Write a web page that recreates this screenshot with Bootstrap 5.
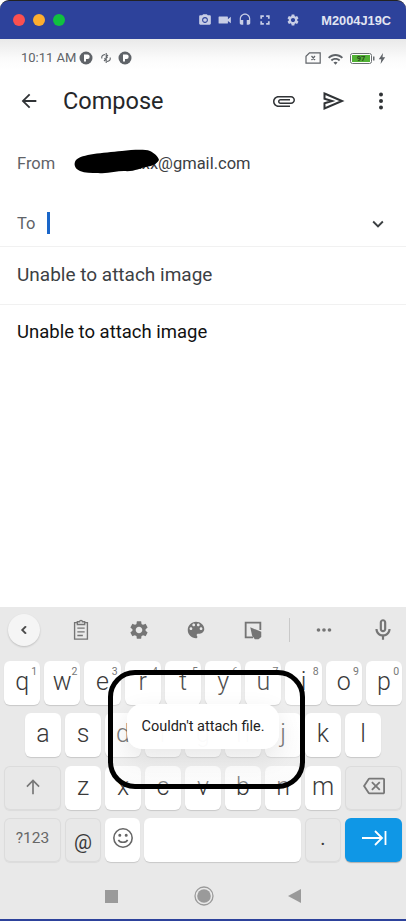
<!DOCTYPE html>
<html lang="en">
<head>
<meta charset="utf-8">
<title>Compose</title>
<link href="https://cdn.jsdelivr.net/npm/bootstrap@5.3.0/dist/css/bootstrap.min.css" rel="stylesheet">
<style>
html,body{margin:0;background:#fff}
body{font-family:Roboto,"Liberation Sans",sans-serif;color:#202124}
.phone{width:406px;height:921px;overflow:hidden;position:relative;background:#fff}
.winbar{height:39px;background:#2d429b;border-radius:9px 9px 0 0;border-top:1px solid #222;padding:0 13px;color:#d5daec}
.dot{width:12px;height:12px;border-radius:50%;margin-right:8px}
.winname{font:700 12.8px "Liberation Sans",sans-serif;color:#e2e5f2;margin-left:21px;margin-right:2px}
.winicons svg{width:14px;height:14px;fill:#c8cee6;margin-left:6px}
.winicons svg.gear{margin-left:14px}
.statusbar{height:36px;padding:2px 20px 0 21px;font-size:13px;color:#5f6368;background:linear-gradient(#e9e9e9 0,#fbfbfb 55%,#fff 85%)}
.statusbar svg{fill:#5f6368}
.appbar{height:52px;padding:0 21px 0 18px}
.apptitle{font-size:23.500px;font-weight:400;margin-left:23px;color:#25272a;padding-top:1px}
.ficon{fill:#303336}
.fieldrow{padding:0 16px;font-size:16.500px}
.fromrow{height:75px}
.torow{height:45px}
.lbl{color:#5f6368;margin-left:1px}
.addr{color:#3c4043;margin-left:21px;position:relative;white-space:nowrap}
.caret-bar{width:2.500px;height:22px;background:#1a66c9;margin-left:12px;margin-top:-3px}
.hair{border-bottom:1px solid #f1f1f1}
.subj{height:58px;font-size:19px;color:#3c4043;padding:0 17px}
.bodytxt{font-size:18.500px;color:#111;padding:15px 17px 0;line-height:24px}
.kb{position:absolute;left:0;right:0;top:607px;height:312px;background:#e9e9e9}
.tools{height:54px}
.backbtn{position:absolute;left:8px;top:7px;width:32px;height:32px;border-radius:50%;background:#f5f5f5;box-shadow:0 1px 2px rgba(0,0,0,.18)}
.tico{position:absolute;top:12px;width:22px;height:22px;fill:#757575}
.tsep{position:absolute;left:289px;top:11px;width:1px;height:24px;background:#c9c9c9}
.keys{padding:0 4px;gap:8.300px}
.krow{display:flex;gap:4px;height:44px}
.krow.mid{padding:0 21px}
.ky{flex:1 1 0;background:#fff;border-radius:6px;box-shadow:0 1px 1px rgba(0,0,0,.14);position:relative;display:flex;align-items:center;justify-content:center;font-size:25px;font-weight:300;color:#3a3a3a;line-height:1;padding-bottom:3px}
.ky sup{position:absolute;top:6px;right:3px;font-size:10.500px;font-weight:400;color:#777;line-height:1}
.alt{background:#e8e8e8;box-shadow:0 0 0 1px #dcdcdc inset,0 1px 1px rgba(0,0,0,.06)}
.wide{flex:0 0 57px}
.ky.num{font-size:15.500px;font-weight:400;color:#666}
.ky.at{flex:0 0 36px;font-size:20px;font-weight:400;padding:4px 0 0}
.ky.emo{flex:0 0 35px}
.ky.space{flex:1 1 0}
.ky.per{flex:0 0 36px;font-size:20px;font-weight:400}
.ky.go{flex:0 0 57px;background:#0f97e6;box-shadow:0 1px 1px rgba(0,0,0,.25)}
.navr{position:absolute;left:0;right:0;top:270px;height:42px}
.ann{position:absolute;left:108px;top:670px;width:197px;height:119px;border:5.500px solid #000;border-radius:27px;background:linear-gradient(rgba(255,255,255,.05) 0,rgba(255,255,255,.3) 40%,rgba(245,245,245,.4) 100%)}
.toastbox{position:absolute;left:127px;top:704px;width:152px;height:45px;background:rgba(255,255,255,.97);border-radius:15px;font-size:14.500px;color:#222;box-shadow:0 8px 24px rgba(0,0,0,.09)}
.strip{position:absolute;left:0;right:0;bottom:0;height:2px;background:#2d429b}
</style>
</head>
<body>
<div class="phone d-flex flex-column">
  <div class="winbar d-flex align-items-center">
    <span class="dot" style="background:#fb5050"></span>
    <span class="dot" style="background:#fdae2f"></span>
    <span class="dot" style="background:#10c13f"></span>
    <div class="winicons ms-auto d-flex align-items-center">
      <svg viewBox="0 0 24 24"><path d="M9 2L7.170 4H4c-1.100 0-2 .9-2 2v12c0 1.100.9 2 2 2h16c1.100 0 2-.9 2-2V6c0-1.100-.9-2-2-2h-3.170L15 2H9zm3 15c-2.760 0-5-2.240-5-5s2.240-5 5-5 5 2.240 5 5-2.240 5-5 5z"/><circle cx="12" cy="12" r="3.200"/></svg>
      <svg viewBox="0 0 24 24"><path d="M17 10.500V7c0-.55-.45-1-1-1H2c-.55 0-1 .45-1 1v10c0 .55.45 1 1 1h14c.55 0 1-.45 1-1v-3.500l5 4v-11l-5 4z"/></svg>
      <svg viewBox="0 0 24 24"><path d="M12 1c-4.970 0-9 4.030-9 9v7c0 1.660 1.340 3 3 3h3v-8H5v-2c0-3.870 3.130-7 7-7s7 3.130 7 7v2h-4v8h3c1.660 0 3-1.340 3-3v-7c0-4.970-4.030-9-9-9z"/></svg>
      <svg viewBox="0 0 24 24"><path d="M7 14H4v6h6v-3H7v-3zM4 10h3V7h3V4H4v6zm13 7h-3v3h6v-6h-3v3zM14 4v3h3v3h3V4h-6z"/></svg>
      <svg class="gear" viewBox="0 0 24 24"><path d="M19.140 12.940c.04-.3.06-.61.06-.94 0-.32-.02-.64-.07-.94l2.030-1.580c.18-.14.23-.41.12-.61l-1.920-3.320c-.12-.22-.37-.29-.59-.22l-2.390.96c-.5-.38-1.030-.7-1.620-.94l-.36-2.540c-.04-.24-.24-.41-.48-.41h-3.840c-.24 0-.43.17-.47.41l-.36 2.540c-.59.24-1.130.57-1.620.94l-2.390-.96c-.22-.08-.47 0-.59.22L2.740 8.870c-.12.21-.08.47.12.61l2.030 1.580c-.05.3-.09.63-.09.94s.02.64.07.94l-2.030 1.580c-.18.14-.23.41-.12.61l1.920 3.320c.12.22.37.29.59.22l2.390-.96c.5.38 1.030.7 1.620.94l.36 2.540c.05.24.24.41.48.41h3.840c.24 0 .44-.17.47-.41l.36-2.540c.59-.24 1.130-.56 1.620-.94l2.390.96c.22.08.47 0 .59-.22l1.920-3.320c.12-.22.07-.47-.12-.61l-2.010-1.580zM12 15.600c-1.980 0-3.600-1.620-3.600-3.600s1.620-3.600 3.600-3.600 3.600 1.620 3.600 3.600-1.620 3.600-3.600 3.600z"/></svg>
    </div>
    <span class="winname">M2004J19C</span>
  </div>

  <div class="statusbar d-flex align-items-center">
    <span>10:11 AM</span>
    <svg width="14" height="14" viewBox="0 0 14 14" style="margin-left:3px"><circle cx="7" cy="7" r="6.500"/><path d="M5 3.500h3.500a2.200 2.200 0 0 1 0 4.400H7V10.500H5z" fill="#fff"/></svg>
    <svg width="12" height="12" viewBox="0 0 12 12" style="margin-left:7px;fill:none;stroke:#5f6368;stroke-width:1.100"><path d="M5 2.500C2.500 3 1 4.500 2 6.500M7 9.500c2.500-.5 4-2 3-4M4 9l1.500-1.500L4.500 6M8 3 6.500 4.500 7.500 6M6.200 1v10"/></svg>
    <svg width="14" height="14" viewBox="0 0 14 14" style="margin-left:6px"><circle cx="7" cy="7" r="6.500"/><path d="M5 3.500h3.500a2.200 2.200 0 0 1 0 4.400H7V10.500H5z" fill="#fff"/></svg>
    <svg class="ms-auto" width="16" height="12" viewBox="0 0 16 12" style="fill:none;stroke:#5f6368;stroke-width:1.200"><path d="M4.500.8H15.200V11.200H1V4.200zM6.500 4l3.500 4M10 4 6.500 8"/></svg>
    <svg width="17" height="15" viewBox="0 0 24 22" style="margin-left:6px"><path d="M1 9l2 2c4.970-4.970 13.030-4.970 18 0l2-2C16.930 2.930 7.080 2.930 1 9zm8 8l3 3 3-3c-1.650-1.660-4.340-1.660-6 0zm-4-4l2 2c2.760-2.760 7.240-2.760 10 0l2-2C15.140 9.140 8.870 9.140 5 13z"/></svg>
    <svg width="25" height="11" viewBox="0 0 25 11" style="margin-left:6px"><rect x=".5" y=".5" width="21" height="10" rx="2" fill="#fff" stroke="#6b6f72"/><rect x="2" y="2" width="18" height="7" fill="#52b135"/><rect x="23" y="3.500" width="1.500" height="4" fill="#6b6f72"/><text x="11" y="8" font-size="7.500" font-weight="700" text-anchor="middle" fill="#2c4a1e" style="font-family:Roboto,sans-serif">97</text></svg>
    <svg width="8" height="11" viewBox="0 0 8 11" style="margin-left:3px"><path d="M5 0 .8 6.200h2.500L2.600 11 7.200 4.300H4.500z"/></svg>
  </div>

  <div class="appbar d-flex align-items-center">
    <svg class="ficon" width="22" height="22" viewBox="0 0 24 24"><path d="M20 11H7.830l5.590-5.590L12 4l-8 8 8 8 1.410-1.410L7.830 13H20v-2z"/></svg>
    <span class="apptitle">Compose</span>
    <svg class="ficon ms-auto" width="24" height="24" viewBox="0 0 24 24"><path transform="rotate(90 12 12)" d="M16.500 6v11.500c0 2.210-1.790 4-4 4s-4-1.790-4-4V5c0-1.380 1.120-2.500 2.500-2.500s2.500 1.120 2.500 2.500v10.500c0 .55-.45 1-1 1s-1-.45-1-1V6H10v9.500c0 1.380 1.120 2.500 2.500 2.500s2.500-1.120 2.500-2.500V5c0-2.210-1.790-4-4-4S7 2.790 7 5v12.500c0 3.040 2.460 5.500 5.500 5.500s5.500-2.460 5.500-5.500V6h-1.500z"/></svg>
    <svg width="24" height="24" viewBox="0 0 24 24" style="margin-left:25px;fill:none;stroke:#303336;stroke-width:2;stroke-linejoin:miter"><path d="M3.500 4.500 21 12 3.500 19.500V14.200L11 12 3.500 9.800Z"/></svg>
    <svg class="ficon" width="24" height="24" viewBox="0 0 24 24" style="margin-left:24px;margin-right:-8px"><circle cx="12" cy="5.500" r="2"/><circle cx="12" cy="12" r="2"/><circle cx="12" cy="18.500" r="2"/></svg>
  </div>

  <div class="fieldrow fromrow d-flex align-items-center">
    <span class="lbl">From</span>
    <span class="addr">xxxxxxxxxx@gmail.com
      <svg width="90" height="28" viewBox="0 0 90 28" style="position:absolute;left:-4px;top:-4px"><path d="M4 12C10 6 30 5 50 3c10-1 22-2 28 0 4 2 8 5 9 9-3 5-8 6-13 7-6 1-12 5-22 4-8 0-16 3-26 2-7 0-13 0-18-2C3 21 1 16 4 12z" fill="#000"/></svg>
    </span>
  </div>
  <div class="fieldrow torow hair d-flex align-items-center">
    <span class="lbl">To</span>
    <span class="caret-bar"></span>
    <svg class="ms-auto" width="22" height="22" viewBox="0 0 24 24" style="margin-right:1px;fill:#3c4043"><path d="M16.590 8.590L12 13.170 7.410 8.590 6 10l6 6 6-6z"/></svg>
  </div>
  <div class="subj hair d-flex align-items-center">Unable to attach image</div>
  <div class="bodytxt">Unable to attach image</div>

  <div class="kb d-flex flex-column">
    <div class="tools position-relative">
      <div class="backbtn d-flex align-items-center justify-content-center"><svg width="16" height="16" viewBox="0 0 24 24" style="fill:#444"><path d="M15.410 7.410 14 6l-6 6 6 6 1.410-1.410L10.830 12z" stroke="#444" stroke-width="1"/></svg></div>
      <svg class="tico" style="left:70px;fill:none;stroke:#757575;stroke-width:1.500" viewBox="0 0 24 24"><path d="M8 4H5v18h14V4h-3M8 6V3h2.500a1.500 1.500 0 0 1 3 0H16v3zM8 10h8M8 14h8M8 18h6"/></svg>
      <svg class="tico" style="left:128px" viewBox="0 0 24 24"><path d="M19.140 12.940c.04-.3.06-.61.06-.94 0-.32-.02-.64-.07-.94l2.030-1.580c.18-.14.23-.41.12-.61l-1.920-3.320c-.12-.22-.37-.29-.59-.22l-2.390.96c-.5-.38-1.030-.7-1.620-.94l-.36-2.540c-.04-.24-.24-.41-.48-.41h-3.840c-.24 0-.43.17-.47.41l-.36 2.540c-.59.24-1.130.57-1.620.94l-2.390-.96c-.22-.08-.47 0-.59.22L2.740 8.870c-.12.21-.08.47.12.61l2.030 1.580c-.05.3-.09.63-.09.94s.02.64.07.94l-2.030 1.580c-.18.14-.23.41-.12.61l1.920 3.320c.12.22.37.29.59.22l2.390-.96c.5.38 1.030.7 1.620.94l.36 2.540c.05.24.24.41.48.41h3.840c.24 0 .44-.17.47-.41l.36-2.540c.59-.24 1.130-.56 1.620-.94l2.390.96c.22.08.47 0 .59-.22l1.920-3.320c.12-.22.07-.47-.12-.61l-2.010-1.580zM12 15.600c-1.980 0-3.600-1.620-3.600-3.600s1.620-3.600 3.600-3.600 3.600 1.620 3.600 3.600-1.620 3.600-3.600 3.600z"/></svg>
      <svg class="tico" style="left:185px" viewBox="0 0 24 24"><path d="M12 3c-4.970 0-9 4.030-9 9s4.030 9 9 9c.83 0 1.500-.67 1.500-1.500 0-.39-.15-.74-.39-1.010-.23-.26-.38-.61-.38-.99 0-.83.67-1.500 1.500-1.500H16c2.760 0 5-2.240 5-5 0-4.420-4.030-8-9-8zm-5.500 9c-.83 0-1.500-.67-1.500-1.500S5.670 9 6.500 9 8 9.670 8 10.500 7.330 12 6.500 12zm3-4C8.670 8 8 7.330 8 6.500S8.670 5 9.500 5s1.500.67 1.500 1.500S10.330 8 9.500 8zm5 0c-.83 0-1.500-.67-1.500-1.500S13.670 5 14.500 5s1.500.67 1.500 1.500S15.330 8 14.500 8zm3 4c-.83 0-1.500-.67-1.500-1.500S16.670 9 17.500 9s1.500.67 1.500 1.500-.67 1.500-1.500 1.500z"/></svg>
      <svg class="tico" style="left:242px" viewBox="0 0 24 24"><path d="M3 3h18v9h-2V5H5v14h7v2H3zM9 9l12 5v5.500L18 22h-4l-3-4z"/></svg>
      <div class="tsep"></div>
      <svg class="tico" style="left:313px" viewBox="0 0 24 24"><circle cx="6" cy="12" r="2"/><circle cx="12" cy="12" r="2"/><circle cx="18" cy="12" r="2"/></svg>
      <svg class="tico" style="left:370px;top:10px;width:26px;height:26px" viewBox="0 0 24 24"><path d="M12 14c1.660 0 3-1.340 3-3V5c0-1.660-1.340-3-3-3S9 3.340 9 5v6c0 1.660 1.340 3 3 3zm-1-9c0-.55.45-1 1-1s1 .45 1 1v6c0 .55-.45 1-1 1s-1-.45-1-1V5zm6 6c0 2.760-2.240 5-5 5s-5-2.240-5-5H5c0 3.530 2.610 6.430 6 6.920V21h2v-3.080c3.390-.49 6-3.390 6-6.920h-2z"/></svg>
    </div>
    <div class="keys d-flex flex-column">
      <div class="krow">
        <div class="ky">q<sup>1</sup></div><div class="ky">w<sup>2</sup></div><div class="ky">e<sup>3</sup></div><div class="ky">r<sup>4</sup></div><div class="ky">t<sup>5</sup></div><div class="ky">y<sup>6</sup></div><div class="ky">u<sup>7</sup></div><div class="ky">i<sup>8</sup></div><div class="ky">o<sup>9</sup></div><div class="ky">p<sup>0</sup></div>
      </div>
      <div class="krow mid">
        <div class="ky">a</div><div class="ky">s</div><div class="ky">d</div><div class="ky">f</div><div class="ky">g</div><div class="ky">h</div><div class="ky">j</div><div class="ky">k</div><div class="ky">l</div>
      </div>
      <div class="krow">
        <div class="ky alt wide"><svg width="20" height="20" viewBox="0 0 24 24" style="fill:#777"><path d="M4 12l1.410 1.410L11 7.830V22h2V7.830l5.580 5.590L20 12l-8-8-8 8z"/></svg></div>
        <div class="ky">z</div><div class="ky">x</div><div class="ky">c</div><div class="ky">v</div><div class="ky">b</div><div class="ky">n</div><div class="ky">m</div>
        <div class="ky alt wide"><svg width="24" height="22" viewBox="0 0 24 24" style="fill:#777"><path d="M22 3H7c-.69 0-1.230.35-1.590.88L0 12l5.410 8.110c.36.53.9.89 1.590.89h15c1.100 0 2-.9 2-2V5c0-1.100-.9-2-2-2zm0 16H7.070L2.400 12l4.660-7H22v14zm-11.590-2L14 13.410 17.590 17 19 15.590 15.410 12 19 8.410 17.590 7 14 10.590 10.410 7 9 8.410 12.590 12 9 15.590z"/></svg></div>
      </div>
      <div class="krow">
        <div class="ky alt wide num">?123</div>
        <div class="ky alt at">@</div>
        <div class="ky emo"><svg width="22" height="22" viewBox="0 0 24 24" style="fill:none;stroke:#666;stroke-width:1.700"><circle cx="12" cy="12" r="10"/><path d="M7 14c1.500 3.500 8.500 3.500 10 0"/><circle cx="8.500" cy="9" r=".8" fill="#666"/><circle cx="15.500" cy="9" r=".8" fill="#666"/></svg></div>
        <div class="ky space"></div>
        <div class="ky alt per">.</div>
        <div class="ky go"><svg width="26" height="18" viewBox="0 0 26 18" style="fill:none;stroke:#fff;stroke-width:1.800"><path d="M1 9h20M14 2l7 7-7 7M24.500 2v14"/></svg></div>
      </div>
    </div>
    <div class="navr">
      <svg width="13" height="13" viewBox="0 0 13 13" style="position:absolute;left:105px;top:13px"><rect width="13" height="13" fill="#9a9a9a"/></svg>
      <svg width="20" height="20" viewBox="0 0 20 20" style="position:absolute;left:194px;top:9px"><circle cx="10" cy="10" r="9" fill="none" stroke="#9a9a9a" stroke-width="1.300"/><circle cx="10" cy="10" r="6.800" fill="#9a9a9a"/></svg>
      <svg width="13" height="14" viewBox="0 0 13 14" style="position:absolute;left:288px;top:12px"><path d="M13 0v14L0 7z" fill="#9a9a9a"/></svg>
    </div>
  </div>

  <div class="ann"></div>
  <div class="toastbox d-flex align-items-center justify-content-center">Couldn't attach file.</div>
  <div class="strip"></div>
</div>
<script src="https://cdn.jsdelivr.net/npm/bootstrap@5.3.0/dist/js/bootstrap.bundle.min.js"></script>
</body>
</html>
